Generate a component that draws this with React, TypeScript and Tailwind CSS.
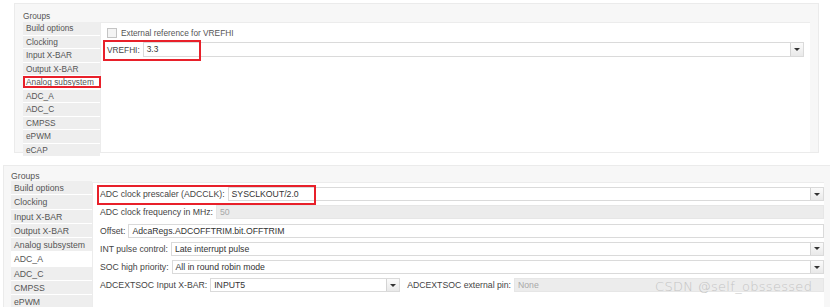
import React from "react";

const font = { fontFamily: '"Liberation Sans", Arial, sans-serif' };

const topGroups = ["Build options", "Clocking", "Input X-BAR", "Output X-BAR", "Analog subsystem", "ADC_A", "ADC_C", "CMPSS", "ePWM", "eCAP"];
const bottomGroups = ["Build options", "Clocking", "Input X-BAR", "Output X-BAR", "Analog subsystem", "ADC_A", "ADC_C", "CMPSS", "ePWM"];

function DropButton() {
    return (
        <div className="w-[13px] h-full flex items-center justify-center border-l border-[#d4d4d4] bg-gradient-to-b from-[#fbfbfb] to-[#e9e9e9]">
            <span className="block w-0 h-0 border-l-[3px] border-r-[3px] border-t-[3px] border-l-transparent border-r-transparent border-t-[#333]" />
        </div>
    );
}

function Field({ value, select, disabled, className = "" }: { value: string; select?: boolean; disabled?: boolean; className?: string }) {
    return (
        <div className={`flex h-[14px] border ${disabled ? "bg-[#ececec] border-[#e6e6e6] text-[#a8a8a8]" : "bg-white border-[#dadada] text-[#333]"} ${className}`}>
            <span className="flex-1 px-[3px] leading-[12px] truncate">{value}</span>
            {select && <DropButton />}
        </div>
    );
}

function Row({ label, children, tall }: { label: string; children: React.ReactNode; tall?: boolean }) {
    return (
        <div className={`flex items-center gap-[3px] ${tall ? "h-[15px]" : "h-[14px]"}`}>
            <span className="whitespace-nowrap text-[#444]">{label}</span>
            {children}
        </div>
    );
}

export default function App() {
    return (
        <div className="relative w-[830px] h-[307px] bg-white overflow-hidden leading-[12px]" style={font}>
            {/* top panel */}
            <div className="ml-[14px] mt-[3px] w-[805px] h-[150px] border border-[#ebebeb] bg-[#f7f7f7] pl-[8px] pr-[8px] flex flex-col text-[8.3px]">
                <div className="h-[18px] pt-[6px] text-[#555]">Groups</div>
                <div className="flex flex-1 min-h-0">
                    <div className="w-[77px] flex flex-col">
                        {topGroups.map((g) => (
                            <div key={g} className={`h-[13.5px] shrink-0 px-[3px] border-b border-white leading-[13px] whitespace-nowrap overflow-hidden text-[#555] ${g === "Analog subsystem" ? "bg-white" : "bg-[#eeeeee]"}`}>{g}</div>
                        ))}
                    </div>
                    <div className="flex-1 bg-white border-l border-t border-[#ececec] pl-[6px] pr-[6px] pt-[5px] flex flex-col gap-[4px]">
                        <div className="flex items-center gap-[4px] h-[10px]">
                            <span className="w-[10px] h-[10px] border border-[#c4c4c4] bg-[#f4f4f4]" />
                            <span className="text-[#555]">External reference for VREFHI</span>
                        </div>
                        <Row label="VREFHI:" tall>
                            <Field value="3.3" select className="flex-1 h-[15px]" />
                        </Row>
                    </div>
                </div>
            </div>

            {/* bottom panel */}
            <div className="ml-[3px] mt-[12px] w-[835px] h-[150px] border border-[#ebebeb] bg-[#f7f7f7] pl-[7px] flex flex-col text-[8.7px]">
                <div className="h-[15px] pt-[4px] text-[#555]">Groups</div>
                <div className="flex flex-1 min-h-0">
                    <div className="w-[81px] flex flex-col">
                        {bottomGroups.map((g) => (
                            <div key={g} className={`h-[14.3px] shrink-0 px-[3px] border-b border-white leading-[14px] whitespace-nowrap overflow-hidden text-[#555] ${g === "ADC_A" ? "bg-white" : "bg-[#eeeeee]"}`}>{g}</div>
                        ))}
                    </div>
                    <div className="w-[732px] mt-[1px] bg-white border-l border-t border-[#ececec] pl-[7px] pt-[4px] flex flex-col gap-[4.3px]">
                        <Row label="ADC clock prescaler (ADCCLK):">
                            <Field value="SYSCLKOUT/2.0" select className="flex-1" />
                        </Row>
                        <Row label="ADC clock frequency in MHz:">
                            <Field value="50" disabled className="flex-1" />
                        </Row>
                        <Row label="Offset:">
                            <Field value="AdcaRegs.ADCOFFTRIM.bit.OFFTRIM" className="flex-1" />
                        </Row>
                        <Row label="INT pulse control:">
                            <Field value="Late interrupt pulse" select className="flex-1" />
                        </Row>
                        <Row label="SOC high priority:">
                            <Field value="All in round robin mode" select className="flex-1" />
                        </Row>
                        <Row label="ADCEXTSOC Input X-BAR:">
                            <Field value="INPUT5" select className="w-[190px]" />
                            <span className="ml-[4px] whitespace-nowrap text-[#444]">ADCEXTSOC external pin:</span>
                            <Field value="None" disabled className="flex-1" />
                        </Row>
                    </div>
                </div>
            </div>

            {/* annotation boxes */}
            <div className="absolute left-[23px] top-[76px] w-[78px] h-[12px] border-2 border-[#e8202a]" />
            <div className="absolute left-[103px] top-[40px] w-[98px] h-[21px] border-2 border-[#e8202a]" />
            <div className="absolute left-[97px] top-[185px] w-[219px] h-[20px] border-2 border-[#e8202a]" />

            {/* watermark */}
            <div className="absolute left-[655px] top-[279px] text-[13px] leading-[16px] text-[#c4c4c4] tracking-[0.3px]" style={{ fontFamily: '"DejaVu Sans", sans-serif', fontWeight: 300 }}>CSDN @self_obssessed</div>
        </div>
    );
}
